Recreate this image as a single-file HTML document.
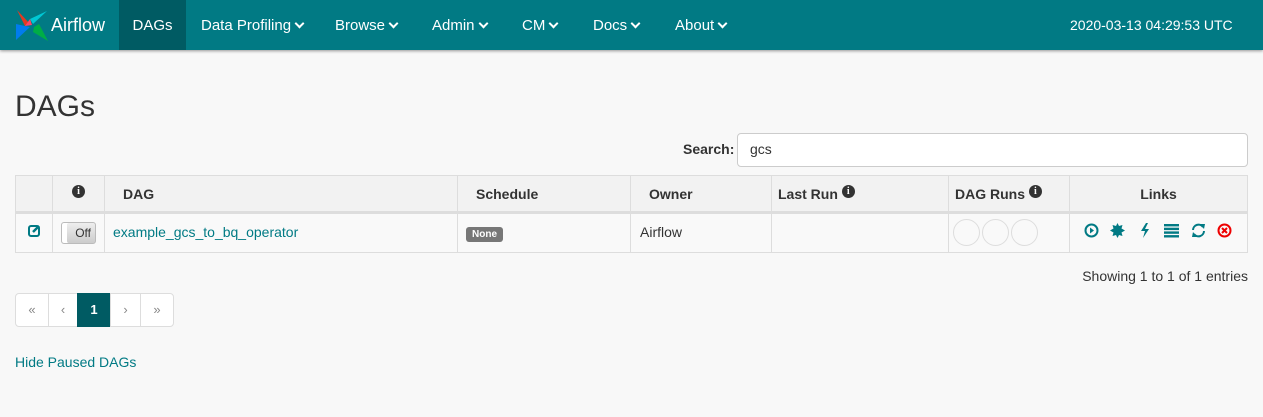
<!DOCTYPE html>
<html><head><style>
*{box-sizing:border-box}
body{margin:0;background:#f8f8f8;font-family:"Liberation Sans",Arial,sans-serif;font-size:14px;color:#333;width:1263px;height:417px;overflow:hidden;position:relative}
.nav{position:absolute;left:0;top:0;width:1263px;height:50px;background:#017a84;box-shadow:0 1px 3px rgba(0,0,0,.4)}
.nav a{position:absolute;top:0;height:50px;line-height:51px;color:#fff;font-size:15px;text-decoration:none}
.caret{display:inline-block;width:7px;height:7px;border-right:2.5px solid #fff;border-bottom:2.5px solid #fff;transform:rotate(45deg);margin-left:5px;position:relative;top:-3px}
h1{position:absolute;left:15px;top:90px;margin:0;font-size:30px;font-weight:normal;color:#333}
.abs{position:absolute}
table{position:absolute;left:15px;top:175px;width:1233px;border-collapse:collapse}
td,th{border:1px solid #ddd;padding:0 8px;font-size:14px}
th{height:37px;background:#f2f2f2;font-weight:bold;border-bottom:3px solid #ddd;text-align:left;padding-left:18px}
td{height:40px;background:#f9f9f9;padding-bottom:2px}
a{color:#017a84;text-decoration:none}
.info{display:inline-block;width:13px;height:13px;border-radius:50%;background:#333;color:#fff;font-size:10px;line-height:13px;text-align:center;font-weight:bold;vertical-align:middle;position:relative;top:-3px;font-family:"Liberation Serif",serif}
.circ{display:inline-block;width:27px;height:27px;border:1px solid #ddd;border-radius:50%;margin-right:2px;vertical-align:middle}
.pg{position:absolute;top:293px;height:34px;border:1px solid #ddd;background:#fff;text-align:center;line-height:32px;color:#888;font-size:13px}
.ic{position:absolute;top:223px}
</style></head><body>
<div class="nav">
<svg class="abs" style="left:14px;top:7px" width="36" height="37" viewBox="0 0 36 37">
<path d="M3 3 L16 17 L11 19 Z" fill="#e43921"/>
<path d="M33 4 L19 17 L16 12 Z" fill="#00c7d4"/>
<path d="M16 12 L18 18 L11 19 Z" fill="#f46"/>
<path d="M2 17 L11 19 L16 20 L2 33 Z" fill="#017cee"/>
<path d="M19 25 L20 20 L25 17 L34 34 Z" fill="#00ad46"/>
</svg>
<a style="left:51px;font-size:18px">Airflow</a>
<a style="left:119px;width:67px;background:#005b63;text-align:center">DAGs</a>
<a style="left:201px">Data Profiling<span class="caret"></span></a>
<a style="left:335px">Browse<span class="caret"></span></a>
<a style="left:432px">Admin<span class="caret"></span></a>
<a style="left:522px">CM<span class="caret"></span></a>
<a style="left:593px">Docs<span class="caret"></span></a>
<a style="left:675px">About<span class="caret"></span></a>
<a style="left:1070px;font-size:14px">2020-03-13 04:29:53 UTC</a>
</div>
<h1>DAGs</h1>
<div class="abs" style="left:683px;top:141px;font-weight:bold">Search:</div>
<div class="abs" style="left:737px;top:133px;width:511px;height:34px;border:1px solid #ccc;border-radius:4px;background:#fff;padding:7px 12px">gcs</div>
<table>
<tr><th style="width:37px"></th><th style="width:52px;text-align:center;padding:0"><span class="info">i</span></th><th style="width:353px">DAG</th><th style="width:173px">Schedule</th><th style="width:141px">Owner</th><th style="width:177px;padding-left:6px">Last Run <span class="info">i</span></th><th style="width:121px;padding-left:6px">DAG Runs <span class="info">i</span></th><th style="text-align:center;padding:0">Links</th></tr>
<tr><td style="text-align:center"><svg width="13" height="13" viewBox="0 0 13 13"><rect x="1" y="2" width="10" height="10" rx="2" fill="none" stroke="#017a84" stroke-width="2"/><path d="M5 8 L11 2" stroke="#017a84" stroke-width="2.5"/></svg></td>
<td style="padding:0 8px"><div style="width:35px;height:22px;border:1px solid #bbb;border-radius:3px;background:linear-gradient(#eee,#ccc);font-size:12px;line-height:20px;text-align:right;padding-right:4px;box-shadow:inset 5px 0 0 #fff">Off</div></td>
<td><a>example_gcs_to_bq_operator</a></td>
<td><span style="background:#777;color:#fff;font-size:10px;font-weight:bold;padding:2px 6px;border-radius:3px">None</span></td>
<td style="padding-left:9px">Airflow</td><td></td>
<td style="padding-left:4px"><span class="circ"></span><span class="circ"></span><span class="circ"></span></td>
<td></td></tr>
</table>
<svg class="ic" style="left:1084px" width="15" height="15" viewBox="0 0 15 15"><circle cx="7.5" cy="7.5" r="6" fill="none" stroke="#017a84" stroke-width="2"/><path d="M6 4.5 L10 7.5 L6 10.5 Z" fill="#017a84"/></svg>
<svg class="ic" style="left:1110px" width="15" height="15" viewBox="0 0 15 15"><path d="M7.5 0 L9 3 L12.5 2 L11.5 5.5 L15 7.5 L11.5 9.5 L12.5 13 L9 12 L7.5 15 L6 12 L2.5 13 L3.5 9.5 L0 7.5 L3.5 5.5 L2.5 2 L6 3 Z" fill="#017a84"/></svg>
<svg class="ic" style="left:1139px" width="12" height="15" viewBox="0 0 12 15"><path d="M7 0 L2 8 L6 8 L4 15 L10 6 L6 6 L9 0 Z" fill="#017a84"/></svg>
<svg class="ic" style="left:1164px" width="15" height="15" viewBox="0 0 15 15"><g fill="#017a84"><rect y="1" width="15" height="2.4"/><rect y="4.7" width="15" height="2.4"/><rect y="8.4" width="15" height="2.4"/><rect y="12.1" width="15" height="2.4"/></g></svg>
<svg class="ic" style="left:1191px" width="15" height="15" viewBox="0 0 15 15"><g fill="none" stroke="#017a84" stroke-width="2"><path d="M2 7 A5.5 5.5 0 0 1 12 4"/><path d="M13 8 A5.5 5.5 0 0 1 3 11"/></g><path d="M9 1 L14 1 L13 6 Z" fill="#017a84"/><path d="M6 14 L1 14 L2 9 Z" fill="#017a84"/></svg>
<svg class="ic" style="left:1217px" width="15" height="15" viewBox="0 0 15 15"><circle cx="7.5" cy="7.5" r="6" fill="none" stroke="#e00" stroke-width="2"/><path d="M5 5 L10 10 M10 5 L5 10" stroke="#e00" stroke-width="2"/></svg>
<div class="abs" style="right:15px;top:268px">Showing 1 to 1 of 1 entries</div>
<div class="pg" style="left:15px;width:34px;border-radius:4px 0 0 4px">«</div>
<div class="pg" style="left:48px;width:30px">‹</div>
<div class="pg" style="left:77px;width:34px;background:#005b63;border-color:#005b63;color:#fff;font-weight:bold">1</div>
<div class="pg" style="left:110px;width:31px">›</div>
<div class="pg" style="left:140px;width:34px;border-radius:0 4px 4px 0">»</div>
<a class="abs" style="left:15px;top:354px">Hide Paused DAGs</a>
</body></html>
